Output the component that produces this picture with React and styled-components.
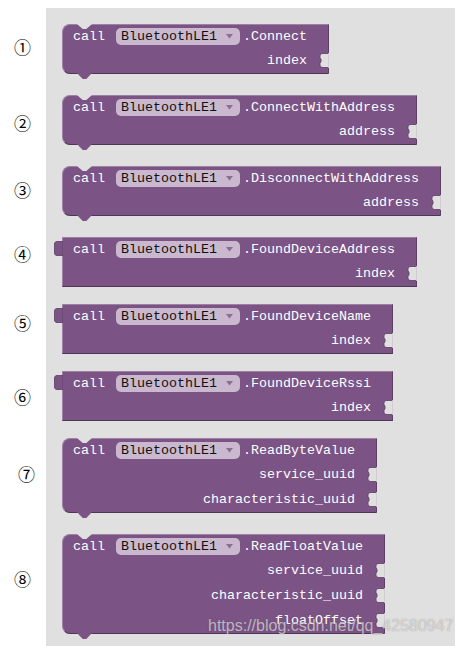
import React from 'react'
import styled, { createGlobalStyle, css } from 'styled-components';

const PURPLE = '#7b5384';
const PANEL = '#e0e0e0';

const GlobalStyle = createGlobalStyle`
  html, body {
    margin: 0;
    padding: 0;
    background: #fff;
  }
`;

const Page = styled.div`
  position: relative;
  width: 455px;
  padding-top: 8px;
`;

const Row = styled.div`
  display: grid;
  grid-template-columns: 46px 409px;
`;

const Number = styled.div`
  padding-top: ${p => p.$top}px;
  padding-left: ${p => p.$left}px;
  font-family: "Noto Sans CJK SC", "DejaVu Sans", sans-serif;
  font-size: 17px;
  line-height: 17px;
  color: #000;
`;

const Cell = styled.div`
  background: ${PANEL};
  display: flex;
  align-items: flex-start;
  padding: ${p => p.$top}px 0 ${p => p.$bottom || 0}px ${p => (p.$value ? 8 : 16)}px;
`;

const OutputTab = styled.svg`
  display: block;
  flex: none;
  margin-top: 4px;
  margin-right: -1px;
  position: relative;
  z-index: 1;
`;

const Block = styled.div`
  position: relative;
  display: inline-flex;
  flex-direction: column;
  background: ${PURPLE};
  border: 1px solid #9d80a4;
  border-right-color: #5c3f63;
  border-bottom-color: #4f3556;
  font-family: "Liberation Mono", "DejaVu Sans Mono", monospace;
  font-size: 13.33px;
  color: #fff;

  ${p => p.$statement && css`
    border-radius: 8px 0 0 8px;

    &::before {
      content: '';
      position: absolute;
      top: -1px;
      left: 14px;
      width: 15px;
      height: 5px;
      background: ${PANEL};
      clip-path: polygon(0 0, 100% 0, 62% 100%, 38% 100%);
    }

    &::after {
      content: '';
      position: absolute;
      bottom: -6px;
      left: 14px;
      width: 15px;
      height: 6px;
      background: ${PURPLE};
      clip-path: polygon(0 0, 100% 0, 62% 100%, 38% 100%);
      filter: drop-shadow(0 1px 0 #4f3556);
    }
  `}
`;

const TitleRow = styled.div`
  display: flex;
  align-items: center;
  height: 23px;
  padding-left: 10px;
  white-space: pre;
`;

const InputRow = styled.div`
  display: flex;
  align-items: center;
  justify-content: flex-end;
  height: 25px;
  white-space: pre;
`;

const Slot = styled.div`
  width: 21px;
  flex: none;
  display: flex;
  justify-content: flex-end;
  align-self: stretch;
  align-items: center;
`;

const Socket = styled.svg`
  display: block;
  margin-right: -1px;
`;

const Dropdown = styled.span`
  display: inline-flex;
  align-items: center;
  height: 17px;
  margin: 0 3px 0 11px;
  padding: 0 7px 0 5px;
  gap: 9px;
  background: #cab9ce;
  border-radius: 5px;
  color: #111;
`;

const Watermark = styled.div`
  position: absolute;
  left: 208px;
  top: 617px;
  font-family: "Liberation Sans", Arial, sans-serif;
  font-size: 16px;
  color: rgba(255, 255, 255, 0.6);
  text-shadow: 0 0 1px rgba(70, 70, 70, 0.55);
  white-space: nowrap;
  pointer-events: none;
`;

const blocks = [
  { n: '①', method: '.Connect', inputs: ['index'], top: 16, num: 30 },
  { n: '②', method: '.ConnectWithAddress', inputs: ['address'], top: 21, num: 40 },
  { n: '③', method: '.DisconnectWithAddress', inputs: ['address'], top: 21, num: 36 },
  { n: '④', method: '.FoundDeviceAddress', inputs: ['index'], top: 21, num: 29, value: true },
  { n: '⑤', method: '.FoundDeviceName', inputs: ['index'], top: 17, num: 27, value: true },
  { n: '⑥', method: '.FoundDeviceRssi', inputs: ['index'], top: 17, num: 34, value: true },
  { n: '⑦', method: '.ReadByteValue', inputs: ['service_uuid', 'characteristic_uuid'], top: 17, num: 44, left: 18 },
  { n: '⑧', method: '.ReadFloatValue', inputs: ['service_uuid', 'characteristic_uuid', 'floatOffset'], top: 21, num: 57, bottom: 12 },
];

function Arrow() {
  return (
    <svg width="7" height="5" viewBox="0 0 7 5">
      <path d="M0 0 L7 0 L3.5 4.5 Z" fill="#8a6d92" />
    </svg>
  );
}

function SocketShape() {
  return (
    <Socket width="10" height="15" viewBox="0 0 10 15">
      <path d="M10 0.5 L4 0.5 C2 0.5 1 1.5 1 3 L1 5 C2.5 5 2.5 10 1 10 L1 12 C1 13.5 2 14.5 4 14.5 L10 14.5 Z" fill={PANEL} stroke="#5c3f63" strokeWidth="0.8" />
      <rect x="9.3" y="0" width="1" height="15" fill={PANEL} />
    </Socket>
  );
}

function MethodBlock({ item }) {
  return (
    <>
      {item.value && (
        <OutputTab width="9" height="15" viewBox="0 0 9 15">
          <path d="M9 0.5 L3 0.5 C1.5 0.5 0.5 1.5 0.5 3 L0.5 12 C0.5 13.5 1.5 14.5 3 14.5 L9 14.5 Z" fill={PURPLE} stroke="#5c3f63" strokeWidth="0.8" />
        </OutputTab>
      )}
      <Block $statement={!item.value}>
        <TitleRow>
          call
          <Dropdown>BluetoothLE1<Arrow /></Dropdown>
          {item.method}
          <Slot />
        </TitleRow>
        {item.inputs.map(name => (
          <InputRow key={name}>
            {name}
            <Slot><SocketShape /></Slot>
          </InputRow>
        ))}
      </Block>
    </>
  );
}

export default function App() {
  return (
    <>
      <GlobalStyle />
      <Page>
        {blocks.map(item => (
          <Row key={item.n}>
            <Number $top={item.num} $left={item.left || 14}>{item.n}</Number>
            <Cell $top={item.top} $bottom={item.bottom} $value={item.value}>
              <MethodBlock item={item} />
            </Cell>
          </Row>
        ))}
        <Watermark>https://blog.csdn.net/qq_42580947</Watermark>
      </Page>
    </>
  );
}
